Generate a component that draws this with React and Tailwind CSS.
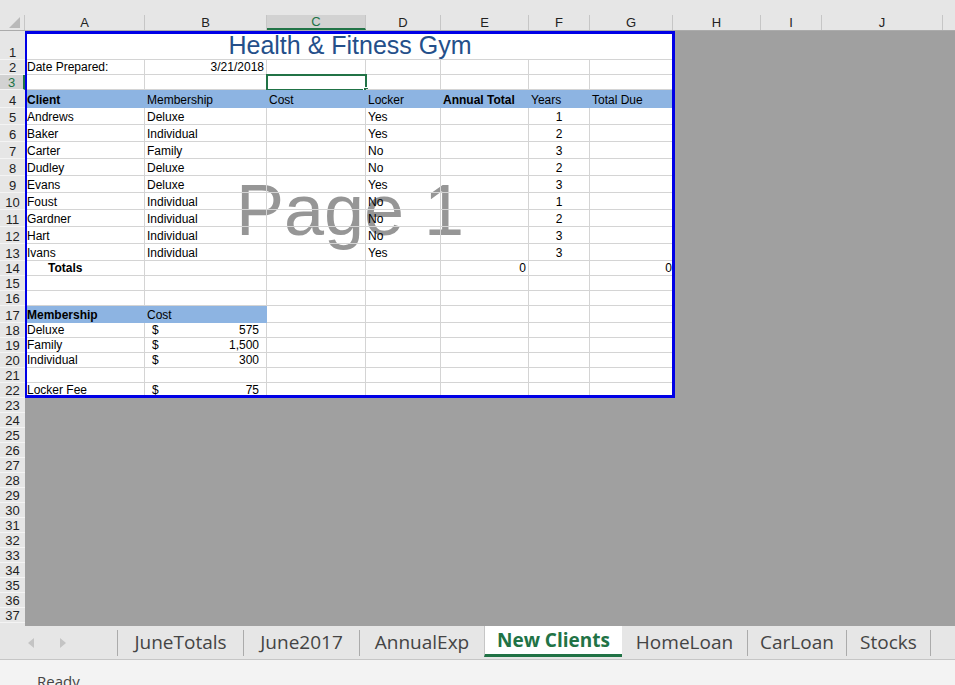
import React from 'react';

// column widths of the sheet, A..J
const HEAD_COLS = [
  ['A', 120], ['B', 122], ['C', 99], ['D', 75], ['E', 88], ['F', 61], ['G', 83], ['H', 88], ['I', 61], ['J', 121],
];
// print area columns A..G (G a bit wider so the page line sits on its edge)
const PRINT_W = [120, 122, 99, 75, 88, 61, 85];

const clients = [
  ['Andrews', 'Deluxe', 'Yes', 1],
  ['Baker', 'Individual', 'Yes', 2],
  ['Carter', 'Family', 'No', 3],
  ['Dudley', 'Deluxe', 'No', 2],
  ['Evans', 'Deluxe', 'Yes', 3],
  ['Foust', 'Individual', 'No', 1],
  ['Gardner', 'Individual', 'No', 2],
  ['Hart', 'Individual', 'No', 3],
  ['Ivans', 'Individual', 'Yes', 3],
];

const rows = [
  { h: 29, title: 'Health & Fitness Gym' },
  { h: 15, cells: ['Date Prepared:', { t: '3/21/2018', right: true }] },
  { h: 15, cells: [], selected: 2 },
  {
    h: 18,
    fill: 7,
    cells: [{ t: 'Client', b: true }, 'Membership', 'Cost', 'Locker', { t: 'Annual Total', b: true }, 'Years', 'Total Due'],
  },
  ...clients.map(([name, plan, locker, years]) => ({
    h: 17,
    cells: [name, plan, '', locker, '', { t: String(years), center: true }, ''],
  })),
  { h: 15, cells: [{ t: 'Totals', b: true, indent: true }, '', '', '', { t: '0', right: true }, '', { t: '0', right: true }] },
  { h: 15, cells: [] },
  { h: 15, cells: [] },
  { h: 17, fill: 2, cells: [{ t: 'Membership', b: true }, 'Cost'] },
  { h: 15, cells: ['Deluxe', { acct: '575' }] },
  { h: 15, cells: ['Family', { acct: '1,500' }] },
  { h: 15, cells: ['Individual', { acct: '300' }] },
  { h: 15, cells: [] },
  { h: 15, cells: ['Locker Fee', { acct: '75' }] },
];

const tabs = [
  ['JuneTotals', 125],
  ['June2017', 115],
  ['AnnualExp', 124],
  ['New Clients', 138, true],
  ['HomeLoan', 125],
  ['CarLoan', 98],
  ['Stocks', 83],
];

const Cell = ({ w, c, fill, selected }) => {
  const v = typeof c === 'string' || c === undefined ? { t: c || '' } : c;
  return (
    <div
      className={`relative flex items-end shrink-0 px-[2px] leading-[13px] border-r border-b ${
        fill ? 'bg-[#8db4e2] border-[#8db4e2]' : 'border-[#d4d4d4]'
      } ${v.right ? 'justify-end' : v.center ? 'justify-center' : ''} ${v.b ? 'font-bold' : ''} ${
        v.indent ? 'pl-[23px]' : ''
      }`}
      style={{ width: w }}
    >
      {v.acct ? (
        <div className="flex w-full justify-between px-[5px]">
          <span>$</span>
          <span>{v.acct}</span>
        </div>
      ) : (
        <span className="whitespace-nowrap">{v.t}</span>
      )}
      {selected && (
        <div className="absolute left-[-1px] top-[-1px] w-[101px] h-[17px] border-2 border-[#217346]">
          <div className="absolute right-[-4px] bottom-[-4px] w-[6px] h-[6px] bg-[#217346] border border-white" />
        </div>
      )}
    </div>
  );
};

const PrintArea = () => (
  <div className="relative w-[650px] bg-white text-[12px] text-black font-['Liberation_Sans',Arial,sans-serif]">
    <div className="absolute left-0 right-0 top-[143px] text-center text-[72px] leading-[72px] text-[#969696] select-none">
      Page 1
    </div>
    <div className="relative">
      {rows.map((r, i) =>
        r.title ? (
          <div key={i} className="flex justify-center pt-[2px] border-b border-[#d4d4d4]" style={{ height: r.h }}>
            <span className="text-[25px] leading-[25px] text-[#244f8a]">{r.title}</span>
          </div>
        ) : (
          <div key={i} className="flex" style={{ height: r.h }}>
            {PRINT_W.map((w, j) => (
              <Cell key={j} w={w} c={r.cells[j]} fill={r.fill && j < r.fill} selected={r.selected === j} />
            ))}
          </div>
        )
      )}
    </div>
    {/* page break line */}
    <div className="absolute inset-0 z-10 border-[3px] border-l-2 border-[#0000e6] pointer-events-none" />
  </div>
);

const rowHeights = [...rows.map(r => r.h), ...Array.from({ length: 16 }, () => 15)];

const App = () => {
  return (
    <div className="w-full h-[685px] overflow-hidden flex flex-col bg-[#e6e6e6] font-['Liberation_Sans',Arial,sans-serif]">
      <div className="h-[15px] shrink-0 bg-[#e6e6e6]" />

      {/* column headers */}
      <div className="flex h-[16px] shrink-0 border-b border-[#ababab] text-[13px] text-[#222]">
        <div className="w-[25px] shrink-0 flex items-end justify-end pr-[4px] pb-[2px] border-r border-[#c6c6c6]">
          <svg width="11" height="11" viewBox="0 0 11 11">
            <polygon points="11,0 11,11 0,11" fill="#b9b9b9" />
          </svg>
        </div>
        {HEAD_COLS.map(([k, w]) => (
          <div
            key={k}
            className={`shrink-0 flex items-center justify-center leading-none border-r border-[#c6c6c6] ${
              k === 'C' ? 'bg-[#d2d2d2] text-[#217346] border-b-2 border-b-[#217346]' : ''
            }`}
            style={{ width: w }}
          >
            {k}
          </div>
        ))}
        <div className="flex-1" />
      </div>

      {/* sheet body */}
      <div className="flex h-[595px] shrink-0 overflow-hidden bg-[#a0a0a0]">
        <div className="w-[25px] shrink-0 flex flex-col bg-[#e6e6e6] text-[13px] text-[#222]">
          {rowHeights.map((h, i) => (
            <div
              key={i}
              className={`shrink-0 flex items-end justify-center leading-[13px] border-b border-[#f4f4f4] ${
                i === 2 ? 'bg-[#d2d2d2] text-[#217346] border-r-2 border-r-[#217346]' : ''
              }`}
              style={{ height: h }}
            >
              {i + 1}
            </div>
          ))}
        </div>
        <div className="flex-1">
          <PrintArea />
        </div>
      </div>

      {/* sheet tabs */}
      <div className="flex h-[34px] shrink-0 items-center bg-[#e6e6e6] border-b border-[#c6c6c6] font-['Open_Sans',sans-serif] text-[19px] leading-[26px] text-[#444]">
        <div className="w-[117px] shrink-0 flex items-center gap-[26px] pl-[28px]">
          <svg width="6" height="10" viewBox="0 0 6 10">
            <polygon points="6,0 6,10 0,5" fill="#c4c4c4" />
          </svg>
          <svg width="6" height="10" viewBox="0 0 6 10">
            <polygon points="0,0 0,10 6,5" fill="#c4c4c4" />
          </svg>
        </div>
        <span className="w-px h-[26px] bg-[#ababab]" />
        {tabs.map(([name, w, active], i) => {
          const next = tabs[i + 1];
          return (
            <React.Fragment key={name}>
              {active ? (
                <div
                  className="self-start h-[31px] shrink-0 flex items-center justify-center bg-white border-l border-[#c6c6c6] border-b-[3px] border-b-[#217346] font-bold text-[#217346]"
                  style={{ width: w }}
                >
                  {name}
                </div>
              ) : (
                <div className="shrink-0 flex items-center justify-center pb-[2px]" style={{ width: w }}>
                  {name}
                </div>
              )}
              {!active && !(next && next[2]) && <span className="w-px h-[26px] bg-[#ababab]" />}
            </React.Fragment>
          );
        })}
      </div>

      {/* status bar */}
      <div className="h-[25px] shrink-0 bg-[#f3f3f3] pl-[37px] pt-[11px] font-['Open_Sans',sans-serif] text-[15px] leading-[20px] text-[#444]">
        Ready
      </div>
    </div>
  );
};

export default App;
